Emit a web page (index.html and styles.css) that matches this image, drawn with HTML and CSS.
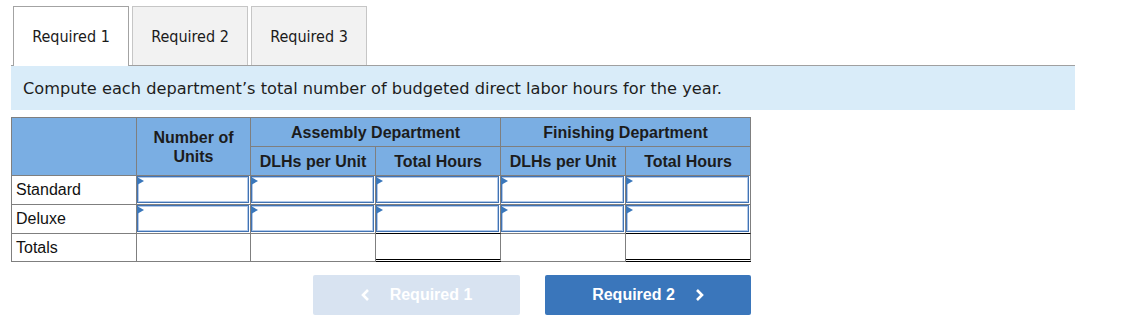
FILE: index.html
```html
<!DOCTYPE html>
<html>
<head>
<meta charset="utf-8">
<link rel="stylesheet" href="styles.css">
</head>
<body>
<div class="page">
  <div class="tabs">
    <div class="tab active">Required 1</div>
    <div class="tab">Required 2</div>
    <div class="tab">Required 3</div>
  </div>
  <div class="prompt">Compute each department’s total number of budgeted direct labor hours for the year.</div>
  <table class="grid">
    <colgroup>
      <col class="c-label"><col class="c-units"><col class="c-std"><col class="c-std"><col class="c-std"><col class="c-std">
    </colgroup>
    <thead>
      <tr class="h1">
        <th rowspan="2"></th>
        <th rowspan="2" class="units">Number of<br>Units</th>
        <th colspan="2">Assembly Department</th>
        <th colspan="2">Finishing Department</th>
      </tr>
      <tr class="h2">
        <th>DLHs per Unit</th>
        <th>Total Hours</th>
        <th>DLHs per Unit</th>
        <th>Total Hours</th>
      </tr>
    </thead>
    <tbody>
      <tr class="row">
        <td class="label">Standard</td>
        <td><div class="inp"></div></td>
        <td><div class="inp"></div></td>
        <td><div class="inp"></div></td>
        <td><div class="inp"></div></td>
        <td><div class="inp"></div></td>
      </tr>
      <tr class="row">
        <td class="label">Deluxe</td>
        <td><div class="inp"></div></td>
        <td><div class="inp"></div></td>
        <td class="sum-above"><div class="inp"></div></td>
        <td><div class="inp"></div></td>
        <td class="sum-above"><div class="inp"></div></td>
      </tr>
      <tr class="row last">
        <td class="label">Totals</td>
        <td></td>
        <td></td>
        <td class="sum"></td>
        <td></td>
        <td class="sum"></td>
      </tr>
    </tbody>
  </table>
  <div class="nav">
    <button class="btn prev"><svg class="chev" width="9" height="12" viewBox="0 0 9 12"><polyline points="7,1 2,6 7,11" fill="none" stroke="#fff" stroke-width="2.6"/></svg><span>Required 1</span></button>
    <button class="btn next"><span>Required 2</span><svg class="chev" width="9" height="12" viewBox="0 0 9 12"><polyline points="2,1 7,6 2,11" fill="none" stroke="#fff" stroke-width="2.6"/></svg></button>
  </div>
</div>
</body>
</html>
```

FILE: styles.css
```css
* { box-sizing: border-box; }
body {
  margin: 0;
  background: #fff;
  font-family: "DejaVu Sans", Verdana, sans-serif;
}
.page {
  padding: 6px 0 0 11px;
  width: 1075px;
}
.tabs {
  display: flex;
  align-items: flex-start;
  gap: 3px;
  padding-left: 2px;
  height: 60px;
  margin-bottom: -1px;
}
.tab {
  width: 116px;
  height: 59px;
  display: flex;
  align-items: center;
  justify-content: center;
  font-family: "DejaVu Sans Condensed", "DejaVu Sans", sans-serif;
  font-stretch: condensed;
  font-size: 16px;
  color: #1a1a1a;
  background: #f2f2f2;
  border: 1px solid #c6c6c6;
  border-bottom: none;
}
.tab.active {
  height: 60px;
  background: #fff;
  border-color: #a3a3a3;
  position: relative;
  z-index: 1;
}
.prompt {
  width: 1064px;
  height: 45px;
  background: #d9ecf9;
  border-top: 1px solid #a0a0a0;
  padding-left: 12px;
  display: flex;
  align-items: center;
  font-size: 16.2px;
  color: #1e1e1e;
}
.grid {
  margin-top: 7px;
  border-collapse: separate;
  border-spacing: 0;
  table-layout: fixed;
  width: 740px;
  border-top: 1px solid #7f7f7f;
  border-left: 1px solid #7f7f7f;
  font-family: "Liberation Sans", Arial, sans-serif;
  font-size: 16px;
  color: #111;
}
.c-label { width: 125px; }
.c-units { width: 114px; }
.c-std { width: 125px; }
.grid th, .grid td {
  padding: 0;
  border-right: 1px solid #7f7f7f;
  border-bottom: 1px solid #7f7f7f;
  vertical-align: top;
}
.grid th {
  background: #7aaee3;
  font-weight: bold;
  color: #1c1c1c;
  text-align: center;
  vertical-align: middle;
  line-height: 19px;
}
.h1 th { height: 29px; }
.h2 th { height: 29px; }
.row td { height: 29px; }
.row.last td { height: 28px; }
.grid td.label {
  padding-left: 4px;
  vertical-align: middle;
  color: #111;
}
.grid td.sum-above { border-bottom-color: #000; }
.grid td.sum { border-bottom: 3px double #000; }
.inp {
  position: relative;
  height: 27px;
  margin-right: 1px;
  border: 1px solid #4173b4;
  box-shadow: inset 0 0 0 1px #b2c9e8;
  background: #fff;
}
.inp::before {
  content: "";
  position: absolute;
  left: -1px;
  top: 0;
  border-left: 7px solid #3a77bb;
  border-top: 4px solid transparent;
  border-bottom: 4px solid transparent;
}
.nav {
  width: 740px;
  margin-top: 13px;
  display: flex;
  justify-content: flex-end;
  gap: 25px;
}
.btn {
  height: 40px;
  border: none;
  border-radius: 2px;
  display: flex;
  align-items: center;
  justify-content: center;
  gap: 20px;
  font-family: "Liberation Sans", Arial, sans-serif;
  font-weight: bold;
  font-size: 16px;
  color: #fff;
  padding: 0;
}
.btn.prev { width: 207px; background: #d8e3f1; }
.btn.next { width: 206px; background: #3a76bb; }
.chev { display: block; }
```
